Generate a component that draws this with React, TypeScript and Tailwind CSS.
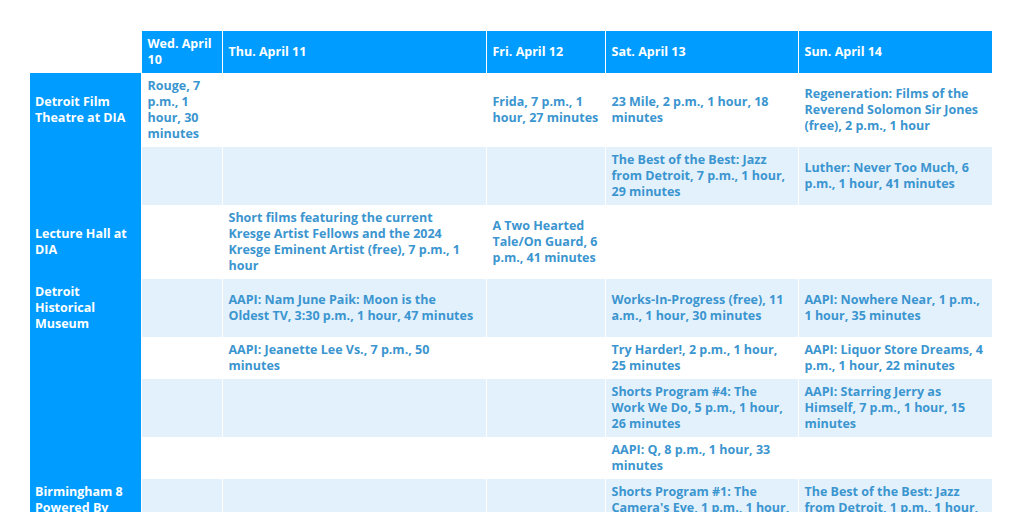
import React from 'react';

const days = ['Wed. April 10', 'Thu. April 11', 'Fri. April 12', 'Sat. April 13', 'Sun. April 14'];

// right padding per day column; Thu is a bit tighter so lines break like the original
const padR = ['pr-[6px]', 'pr-[10px]', 'pr-[6px]', 'pr-[6px]', 'pr-[6px]'];

const rows: string[][] = [
  [
    'Detroit Film Theatre at DIA',
    'Rouge, 7 p.m., 1 hour, 30 minutes',
    '',
    'Frida, 7 p.m., 1 hour, 27 minutes',
    '23 Mile, 2 p.m., 1 hour, 18 minutes',
    'Regeneration: Films of the Reverend Solomon Sir Jones (free), 2 p.m., 1 hour',
  ],
  [
    '',
    '',
    '',
    '',
    'The Best of the Best: Jazz from Detroit, 7 p.m., 1 hour, 29 minutes',
    'Luther: Never Too Much, 6 p.m., 1 hour, 41 minutes',
  ],
  [
    'Lecture Hall at DIA',
    '',
    'Short films featuring the current Kresge Artist Fellows and the 2024 Kresge Eminent Artist (free), 7 p.m., 1 hour',
    'A Two Hearted Tale/On Guard, 6 p.m., 41 minutes',
    '',
    '',
  ],
  [
    'Detroit Historical Museum',
    '',
    'AAPI: Nam June Paik: Moon is the Oldest TV, 3:30 p.m., 1 hour, 47 minutes',
    '',
    'Works-In-Progress (free), 11 a.m., 1 hour, 30 minutes',
    'AAPI: Nowhere Near, 1 p.m., 1 hour, 35 minutes',
  ],
  [
    '',
    '',
    'AAPI: Jeanette Lee Vs., 7 p.m., 50 minutes',
    '',
    'Try Harder!, 2 p.m., 1 hour, 25 minutes',
    'AAPI: Liquor Store Dreams, 4 p.m., 1 hour, 22 minutes',
  ],
  [
    '',
    '',
    '',
    '',
    'Shorts Program #4: The Work We Do, 5 p.m., 1 hour, 26 minutes',
    'AAPI: Starring Jerry as Himself, 7 p.m., 1 hour, 15 minutes',
  ],
  ['', '', '', '', 'AAPI: Q, 8 p.m., 1 hour, 33 minutes', ''],
  [
    'Birmingham 8 Powered By Emagine',
    '',
    '',
    '',
    "Shorts Program #1: The Camera's Eye, 1 p.m., 1 hour, 20 minutes",
    'The Best of the Best: Jazz from Detroit, 1 p.m., 1 hour, 29 minutes',
  ],
];

export default function App() {
  return (
    <div className="bg-white w-[1024px] h-[512px] overflow-hidden pt-[31px] pl-[30px] font-['Open_Sans',sans-serif] font-bold text-[12.5px] leading-4">
      <table className="table-fixed border-collapse w-[962px]">
        <colgroup>
          <col className="w-[111px]" />
          <col className="w-[81px]" />
          <col className="w-[264px]" />
          <col className="w-[119px]" />
          <col className="w-[193px]" />
          <col className="w-[194px]" />
        </colgroup>
        <thead>
          <tr>
            <th className="p-0" />
            {days.map((d) => (
              <th
                key={d}
                className="bg-[#009cff] text-white text-left align-middle pl-[6px] pr-[4px] py-[5px] h-[42px] border-l border-white font-bold"
              >
                {d}
              </th>
            ))}
          </tr>
        </thead>
        <tbody>
          {rows.map((r, i) => (
            <tr key={i} className={i % 2 === 1 ? 'bg-[#e3f1fd]' : 'bg-white'}>
              <td className="bg-[#009cff] text-white align-middle pl-[5px] pr-[6px] py-[5px] h-[42px]">{r[0]}</td>
              {r.slice(1).map((c, j) => (
                <td key={j} className={`text-[#3b95cf] align-middle pl-[6px] ${padR[j]} py-[5px] border-l border-white`}>
                  {c}
                </td>
              ))}
            </tr>
          ))}
        </tbody>
      </table>
    </div>
  );
}
